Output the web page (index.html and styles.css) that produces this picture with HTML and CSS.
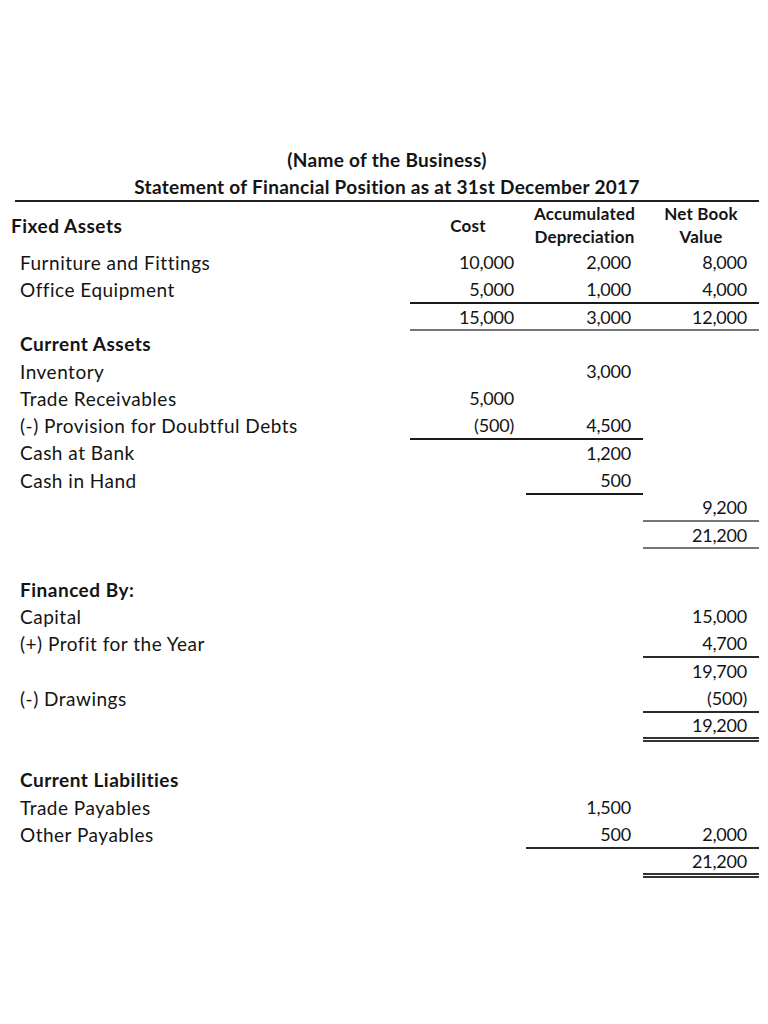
FILE: index.html
```html
<!DOCTYPE html>
<html lang="en">
<head>
<meta charset="utf-8">
<title>Statement of Financial Position</title>
<link rel="stylesheet" href="styles.css">
</head>
<body>
<table class="sheet">
  <colgroup>
    <col class="c-label">
    <col class="c-num">
    <col class="c-num2">
    <col class="c-num">
  </colgroup>
  <tbody>
    <tr class="row title"><td colspan="4">(Name of the Business)</td></tr>
    <tr class="row title"><td colspan="4" class="rule-top">Statement of Financial Position as at 31st December 2017</td></tr>
    <tr class="head">
      <td class="label section first">Fixed Assets</td>
      <td class="hc">Cost</td>
      <td class="hc">Accumulated<br>Depreciation</td>
      <td class="hc">Net Book<br>Value</td>
    </tr>
    <tr class="row"><td class="label">Furniture and Fittings</td><td class="num">10,000</td><td class="num">2,000</td><td class="num">8,000</td></tr>
    <tr class="row"><td class="label">Office Equipment</td><td class="num b">5,000</td><td class="num b">1,000</td><td class="num b">4,000</td></tr>
    <tr class="row"><td class="label"></td><td class="num g">15,000</td><td class="num g">3,000</td><td class="num g">12,000</td></tr>
    <tr class="row"><td class="label section">Current Assets</td><td></td><td></td><td></td></tr>
    <tr class="row"><td class="label">Inventory</td><td></td><td class="num">3,000</td><td></td></tr>
    <tr class="row"><td class="label">Trade Receivables</td><td class="num">5,000</td><td></td><td></td></tr>
    <tr class="row"><td class="label">(-) Provision for Doubtful Debts</td><td class="num b">(500)</td><td class="num b">4,500</td><td></td></tr>
    <tr class="row"><td class="label">Cash at Bank</td><td></td><td class="num">1,200</td><td></td></tr>
    <tr class="row"><td class="label">Cash in Hand</td><td></td><td class="num b">500</td><td></td></tr>
    <tr class="row"><td class="label"></td><td></td><td></td><td class="num g">9,200</td></tr>
    <tr class="row"><td class="label"></td><td></td><td></td><td class="num g">21,200</td></tr>
    <tr class="row"><td class="label"></td><td></td><td></td><td></td></tr>
    <tr class="row"><td class="label section">Financed By:</td><td></td><td></td><td></td></tr>
    <tr class="row"><td class="label">Capital</td><td></td><td></td><td class="num">15,000</td></tr>
    <tr class="row"><td class="label">(+) Profit for the Year</td><td></td><td></td><td class="num b1">4,700</td></tr>
    <tr class="row"><td class="label"></td><td></td><td></td><td class="num">19,700</td></tr>
    <tr class="row"><td class="label">(-) Drawings</td><td></td><td></td><td class="num b1">(500)</td></tr>
    <tr class="row"><td class="label"></td><td></td><td></td><td class="num dbl">19,200</td></tr>
    <tr class="row"><td class="label"></td><td></td><td></td><td></td></tr>
    <tr class="row"><td class="label section">Current Liabilities</td><td></td><td></td><td></td></tr>
    <tr class="row"><td class="label">Trade Payables</td><td></td><td class="num">1,500</td><td></td></tr>
    <tr class="row"><td class="label">Other Payables</td><td></td><td class="num b1">500</td><td class="num b1">2,000</td></tr>
    <tr class="row"><td class="label"></td><td></td><td></td><td class="num dbl">21,200</td></tr>
  </tbody>
</table>
</body>
</html>
```

FILE: styles.css
```css
html, body {
  margin: 0;
  padding: 0;
  background: #ffffff;
}

body {
  font-family: "Lato", "Liberation Sans", sans-serif;
  color: #141414;
}

.sheet {
  margin: 146px 0 0 15px;
  width: 744px;
  border-collapse: collapse;
  table-layout: fixed;
  font-size: 19px;
  letter-spacing: 0.5px;
}

.c-label { width: 395px; }
.c-num { width: 116px; }
.c-num2 { width: 117px; }

.sheet td {
  padding: 0;
  white-space: nowrap;
}

.row {
  height: 27.25px;
}

.title td {
  text-align: center;
  font-weight: 700;
  letter-spacing: 0.3px;
}

.rule-top {
  border-bottom: 2px solid #222;
}

.head {
  height: 48px;
}

.hc {
  text-align: center;
  font-weight: 700;
  font-size: 17px;
  letter-spacing: 0.2px;
  line-height: 23px;
}

.label {
  padding-left: 5px !important;
}

.label.first {
  padding-left: 0 !important;
  text-indent: -4px;
}

.section {
  font-weight: 700;
}

.num {
  text-align: right;
  padding-right: 12px !important;
  font-size: 18px;
  letter-spacing: -0.2px;
}

.num.b {
  border-bottom: 2px solid #1a1a1a;
}

.num.b1 {
  border-bottom: 2px solid #2a2a2a;
}

.num.g {
  border-bottom: 2px solid #777;
}

.num.dbl {
  border-bottom: 5px double #333;
}
```
